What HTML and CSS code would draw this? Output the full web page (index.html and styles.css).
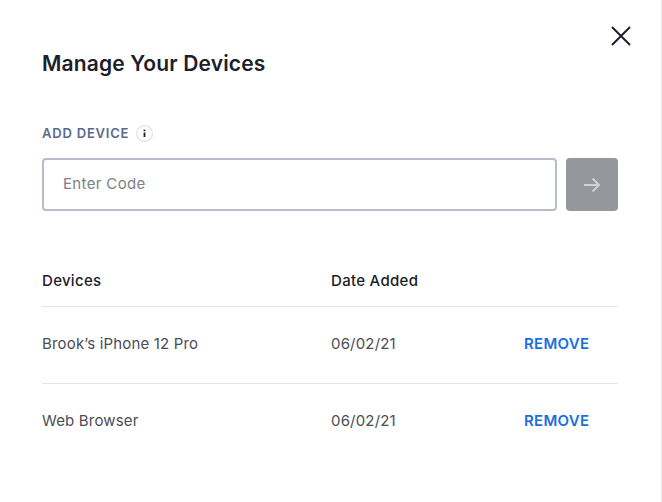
FILE: index.html
```html
<!DOCTYPE html>
<html lang="en">
<head>
    <meta charset="UTF-8">
    <meta name="viewport" content="width=device-width, initial-scale=1.0">
    <title>Manage Your Devices</title>
    <link rel="stylesheet" href="styles.css">
</head>
<body>
    <div class="modal">
        <button class="close" aria-label="Close">
            <svg width="22" height="22" viewBox="0 0 22 22" fill="none" stroke="#1c2029" stroke-width="2">
                <path d="M2 2L20 20M20 2L2 20"/>
            </svg>
        </button>

        <h1>Manage Your Devices</h1>

        <div class="add-label">
            <span>ADD DEVICE</span>
            <svg class="info" width="17" height="17" viewBox="0 0 17 17" fill="none">
                <circle cx="8.5" cy="8.5" r="7.9" stroke="#dfe1e8" stroke-width="1.2"/>
                <path d="M8.5 7.5V12" stroke="#1c2029" stroke-width="1.8"/>
                <path d="M8.5 4.6V6.2" stroke="#1c2029" stroke-width="1.8"/>
            </svg>
        </div>
        <form class="add-form">
            <input type="text" placeholder="Enter Code">
            <button type="button" class="submit" aria-label="Submit">
                <svg width="18" height="16" viewBox="0 0 18 16" fill="none" stroke="#d0d1d4" stroke-width="2">
                    <path d="M1 8H16M9.5 1.5L16 8L9.5 14.5"/>
                </svg>
            </button>
        </form>

        <!-- Devices -->
        <div class="row head">
            <div class="col-name">Devices</div>
            <div class="col-date">Date Added</div>
        </div>
        <div class="row">
            <div class="col-name">Brook’s iPhone 12 Pro</div>
            <div class="col-date">06/02/21</div>
            <a class="remove" href="#">REMOVE</a>
        </div>
        <div class="row">
            <div class="col-name">Web Browser</div>
            <div class="col-date">06/02/21</div>
            <a class="remove" href="#">REMOVE</a>
        </div>
    </div>
</body>
</html>
```

FILE: styles.css
```css
* {
    margin: 0;
    padding: 0;
    box-sizing: border-box;
}

html, body {
    height: 100%;
    overflow: hidden;
}

body {
    font-family: 'Inter', sans-serif;
    background: #fff;
    color: #1c2029;
}

.modal {
    position: relative;
    height: 502px;
    padding: 50px 43px 0 42px;
    border-right: 1px solid #ebebed;
}

.close {
    position: absolute;
    top: 25px;
    right: 29px;
    display: flex;
    background: none;
    border: none;
}

h1 {
    font-size: 21px;
    line-height: 28px;
    font-weight: 600;
    letter-spacing: 0.15px;
}

.add-label {
    display: flex;
    align-items: center;
    gap: 7px;
    margin-top: 46px;
    height: 18px;
    font-size: 13px;
    font-weight: 600;
    letter-spacing: 0.8px;
    color: #5a6a8a;
}

.add-form {
    display: flex;
    gap: 9px;
    margin-top: 16px;
}

.add-form input {
    flex: 1;
    height: 53px;
    padding: 0 19px 3px;
    border: 2px solid #b6bdcd;
    border-radius: 4px;
    font-family: inherit;
    font-size: 15px;
    letter-spacing: 0.35px;
    outline: none;
}

.add-form input::placeholder {
    color: #7d8087;
    opacity: 1;
}

.submit {
    display: flex;
    align-items: center;
    justify-content: center;
    width: 52px;
    height: 53px;
    background: #96979c;
    border: none;
    border-radius: 4px;
}

.row {
    display: flex;
    align-items: center;
    height: 77px;
    padding-bottom: 3px;
    border-top: 1px solid #e4e4ea;
    font-size: 15px;
    letter-spacing: 0.17px;
    color: #4a4d55;
}

.row.head {
    height: 52px;
    margin-top: 43px;
    padding-bottom: 0;
    border-top: none;
    font-weight: 500;
    letter-spacing: 0.3px;
    color: #1c2029;
}

.col-name {
    width: 289px;
}

.col-date {
    width: 193px;
}

.remove {
    font-size: 15px;
    font-weight: 600;
    letter-spacing: 0.3px;
    color: #1a6fe0;
    text-decoration: none;
}
```
